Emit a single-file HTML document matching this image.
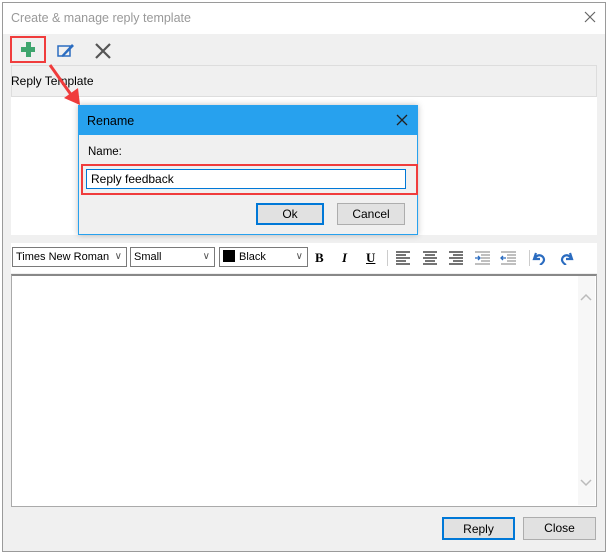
<!DOCTYPE html><html><head><style>
body{margin:0;width:608px;height:556px;background:#fff;font-family:"Liberation Sans",sans-serif;font-size:12px;position:relative;overflow:hidden}
.a{position:absolute;box-sizing:border-box}
.btn{background:#e1e1e1;border:1px solid #adadad;text-align:center;line-height:20px}
.sel{background:#fff;border:1px solid #7a7a7a;height:20px;line-height:18px;padding-left:3px;font-size:11px}
.chev{position:absolute;right:4px;top:0;color:#555;font-size:10px}
</style></head><body>
<div class="a" style="left:2px;top:2px;width:604px;height:550px;border:1px solid #9a9a9a;background:#f0f0f0"></div>
<div class="a" style="left:3px;top:3px;width:602px;height:31px;background:#fff"></div>
<div class="a" style="left:11px;top:11px;color:#999;font-size:12.5px">Create &amp; manage reply template</div>
<svg class="a" style="left:584px;top:11px" width="12" height="12"><path d="M1 1L11 11M11 1L1 11" stroke="#666" stroke-width="1.2"/></svg>
<div class="a" style="left:10px;top:36px;width:36px;height:27px;border:2px solid #f03c3c"></div>
<div class="a" style="left:21px;top:47px;width:14px;height:5px;background:#3fa56e"></div>
<div class="a" style="left:25.5px;top:42px;width:5px;height:15px;background:#3fa56e"></div>
<svg class="a" style="left:57px;top:41px" width="18" height="18"><rect x="1" y="5" width="12" height="10" fill="none" stroke="#2b6cc0" stroke-width="1.5"/><path d="M4 15 L15 3 L17 5 L6 16 Z" fill="#2b6cc0"/></svg>
<svg class="a" style="left:94px;top:42px" width="18" height="18"><path d="M2 2 L16 16 M16 2 L2 16" stroke="#555" stroke-width="2.2"/></svg>
<div class="a" style="left:11px;top:65px;width:586px;height:32px;border:1px solid #ddd;background:#f0f0f0"></div>
<div class="a" style="left:11px;top:74px">Reply Template</div>
<div class="a" style="left:11px;top:97px;width:586px;height:138px;background:#fff"></div>
<div class="a" style="left:11px;top:243px;width:586px;height:30px;background:#fff"></div>
<div class="a sel" style="left:12px;top:247px;width:115px">Times New Roman<span class="chev">∨</span></div>
<div class="a sel" style="left:130px;top:247px;width:85px">Small<span class="chev">∨</span></div>
<div class="a sel" style="left:219px;top:247px;width:89px"><span style="display:inline-block;width:12px;height:12px;background:#000;vertical-align:-2px;margin-right:4px"></span>Black<span class="chev">∨</span></div>
<div class="a" style="left:315px;top:250px;font-family:'Liberation Serif';font-weight:bold;font-size:13px">B</div>
<div class="a" style="left:342px;top:250px;font-family:'Liberation Serif';font-style:italic;font-weight:bold;font-size:13px">I</div>
<div class="a" style="left:366px;top:250px;font-family:'Liberation Serif';font-weight:bold;font-size:13px;text-decoration:underline">U</div>
<div class="a" style="left:387px;top:250px;width:1px;height:16px;background:#ccc"></div>
<svg class="a" style="left:395px;top:251px" width="180" height="14" fill="none" stroke="#222" stroke-width="1.3">
<path d="M1 1h14M1 4h10M1 7h14M1 10h10M1 13h14"/>
<path d="M28 1h14M30 4h10M28 7h14M30 10h10M28 13h14"/>
<path d="M54 1h14M58 4h10M54 7h14M58 10h10M54 13h14"/>
<g stroke="#999"><path d="M80 1h15M86 4h9M86 7h9M86 10h9M80 13h15"/><path d="M106 1h15M112 4h9M112 7h9M112 10h9M106 13h15"/></g>
<path d="M80 7h5M83 5l2 2-2 2" stroke="#2b6cc0"/><path d="M106 7h5M108 5l-2 2 2 2" stroke="#2b6cc0"/>
<path d="M141 2 l-2 6 l6 0 M140 7 q4 -5 8 -1 q3 4 -3 8" stroke="#2b6cc0" stroke-width="2.2"/>
<path d="M175 2 l2 6 l-6 0 M176 7 q-4 -5 -8 -1 q-3 4 3 8" stroke="#2b6cc0" stroke-width="2.2"/>
</svg>
<div class="a" style="left:529px;top:250px;width:1px;height:16px;background:#ccc"></div>
<div class="a" style="left:11px;top:274px;width:586px;height:233px;border:1px solid #aaa;border-top:2px solid #888;background:#fff"></div>
<div class="a" style="left:578px;top:276px;width:17px;height:229px;background:#f7f7f7"></div>
<svg class="a" style="left:580px;top:293px" width="12" height="8"><path d="M1 7L6 2L11 7" stroke="#bbb" stroke-width="1.5" fill="none"/></svg>
<svg class="a" style="left:580px;top:479px" width="12" height="8"><path d="M1 1L6 6L11 1" stroke="#bbb" stroke-width="1.5" fill="none"/></svg>
<div class="a btn" style="left:442px;top:517px;width:73px;height:23px;border:2px solid #0078d7">Reply</div>
<div class="a btn" style="left:523px;top:517px;width:73px;height:23px">Close</div>
<svg class="a" style="left:40px;top:60px" width="50" height="50"><path d="M10 5 L32 36" stroke="#f03c3c" stroke-width="3"/><path d="M24 38 L40 45 L38 28 Z" fill="#f03c3c"/></svg>
<div class="a" style="left:78px;top:105px;width:340px;height:130px;border:1px solid #27a1ee;background:#f0f0f0;box-shadow:0 0 6px rgba(0,0,0,.25)"></div>
<div class="a" style="left:78px;top:105px;width:340px;height:30px;background:#27a1ee"></div>
<div class="a" style="left:87px;top:114px;font-size:12.5px">Rename</div>
<svg class="a" style="left:396px;top:114px" width="12" height="12"><path d="M1 1L11 11M11 1L1 11" stroke="#222" stroke-width="1.3"/></svg>
<div class="a" style="left:88px;top:146px;font-size:11.5px">Name:</div>
<div class="a" style="left:81px;top:164px;width:337px;height:31px;border:2px solid #f03c3c"></div>
<div class="a" style="left:86px;top:169px;width:320px;height:20px;border:1px solid #0078d7;background:#fff;padding-left:4px;line-height:18px">Reply feedback</div>
<div class="a btn" style="left:256px;top:203px;width:68px;height:22px;border:2px solid #0078d7;line-height:18px">Ok</div>
<div class="a btn" style="left:337px;top:203px;width:68px;height:22px">Cancel</div>
</body></html>
